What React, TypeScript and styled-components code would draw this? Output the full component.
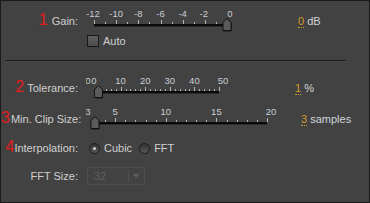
import React from 'react';
import styled, { createGlobalStyle } from 'styled-components';

const GlobalStyle = createGlobalStyle`
  html, body {
    margin: 0;
    padding: 0;
    background: #424242;
  }
`;

const Panel = styled.div`
  box-sizing: border-box;
  width: 370px;
  height: 203px;
  background: #424242;
  border: 1px solid #1a1a1a;
  display: flex;
  flex-direction: column;
  font-family: 'Liberation Sans', Arial, sans-serif;
  font-size: 11px;
  color: #d0d0d0;
  overflow: hidden;
`;

const Row = styled.div<{ $top: number; $h: number; $center?: boolean }>`
  display: grid;
  grid-template-columns: 85px 210px 1fr;
  height: ${(p) => p.$h}px;
  margin-top: ${(p) => p.$top}px;
  align-items: ${(p) => (p.$center ? 'center' : 'start')};
`;

const Label = styled.div<{ $pad?: number }>`
  text-align: right;
  padding-right: 8px;
  padding-top: ${(p) => p.$pad ?? 0}px;
  line-height: 13px;
  white-space: nowrap;
`;

const Num = styled.span<{ $gap: number }>`
  color: #e31c1c;
  font-size: 16px;
  line-height: 0;
  margin-right: ${(p) => p.$gap}px;
`;

const Value = styled.div<{ $dx: number }>`
  padding-top: 7px;
  margin-left: ${(p) => p.$dx}px;
  line-height: 13px;
  white-space: nowrap;
  color: #d0d4d8;
`;

const Hot = styled.span`
  color: #d19a2c;
  border-bottom: 1px dotted #d19a2c;
`;

const Controls = styled.div<{ $indent: number }>`
  display: flex;
  align-items: center;
  margin-left: ${(p) => p.$indent}px;
  line-height: 13px;
`;

const Check = styled.span`
  box-sizing: border-box;
  width: 12px;
  height: 12px;
  border: 1px solid #181818;
  background: linear-gradient(#606060, #4c4c4c);
  margin-right: 4px;
`;

const Radio = styled.span<{ $on?: boolean }>`
  box-sizing: border-box;
  width: 11px;
  height: 11px;
  border-radius: 50%;
  border: 1px solid #1a1a1a;
  background: linear-gradient(#353535, #555555);
  margin-right: 4px;
  display: flex;
  align-items: center;
  justify-content: center;
  &::after {
    content: '';
    display: ${(p) => (p.$on ? 'block' : 'none')};
    width: 3px;
    height: 3px;
    border-radius: 50%;
    background: #d0d0d0;
  }
`;

const RadioText = styled.span<{ $after: number }>`
  margin-right: ${(p) => p.$after}px;
`;

const Separator = styled.div`
  margin: 11px 0 0 4px;
  width: 341px;
  height: 1px;
  background: #1c1c1c;
  border-bottom: 1px solid #4a4a4a;
`;

const Select = styled.div`
  box-sizing: border-box;
  width: 58px;
  height: 18px;
  border: 1px solid #4f4f4f;
  display: flex;
  align-items: center;
  color: #606060;
`;

const SelectText = styled.span`
  flex: 1;
  padding-left: 6px;
`;

const SelectDivider = styled.span`
  width: 1px;
  height: 12px;
  background: #4f4f4f;
  margin-right: 4px;
`;

const Arrow = styled.span`
  width: 0;
  height: 0;
  border-left: 3.5px solid transparent;
  border-right: 3.5px solid transparent;
  border-top: 4px solid #606060;
  margin-right: 5px;
`;

type Mark = { v: number; t: string; dx?: number };

interface ScaleProps {
  min: number;
  max: number;
  value: number;
  x0: number;
  len: number;
  step: number;
  major: number;
  marks: Mark[];
}

// slider drawn as a small ruler: labels, ticks, track and thumb
const Scale = ({ min, max, value, x0, len, step, major, marks }: ScaleProps) => {
  const px = (v: number) => x0 + ((v - min) / (max - min)) * len;
  const ticks: number[] = [];
  for (let v = min; v <= max + 1e-6; v += step) ticks.push(v);
  const tx = px(value) - 4.5;

  return (
    <svg width={210} height={24} style={{ display: 'block' }}>
      {marks.map((m, i) => (
        <text
          key={i + 'm'}
          x={px(m.v) + (m.dx || 0)}
          y={9}
          textAnchor="middle"
          fontSize={9.5}
          fontFamily="'Liberation Sans', Arial, sans-serif"
          fill="#c8ced4"
        >
          {m.t}
        </text>
      ))}
      {ticks.map((v, i) => {
        const isMajor = Math.round(v) % major === 0;
        return (
          <rect
            key={i + 't'}
            x={Math.round(px(v))}
            y={isMajor ? 12 : 14}
            width={1}
            height={isMajor ? 4 : 2}
            fill="#b4b4b4"
          />
        );
      })}
      <rect x={x0} y={16} width={len} height={2} fill="#0a0a0a" />
      <rect x={x0} y={18} width={len} height={1} fill="#2a2a2a" />
      <g transform={`translate(${tx}, 10)`}>
        <polygon points="1,13.5 9,13.5 9,5 5,1 1,5" fill="#1a1a1a" />
        <polygon
          points="0.5,12.5 8.5,12.5 8.5,4.5 4.5,0.5 0.5,4.5"
          fill="#5b5b5b"
          stroke="#111"
        />
      </g>
    </svg>
  );
};

const App = () => {
  return (
    <>
      <GlobalStyle />
      <Panel>
        <Row $top={7} $h={24}>
          <Label $pad={7}>
            <Num $gap={4}>1</Num>Gain:
          </Label>
          <Scale
            min={-12}
            max={0}
            value={0}
            x0={8}
            len={133}
            step={1}
            major={2}
            marks={[
              { v: -12, t: '-12', dx: -1 },
              { v: -10, t: '-10' },
              { v: -8, t: '-8' },
              { v: -6, t: '-6' },
              { v: -4, t: '-4' },
              { v: -2, t: '-2', dx: -1 },
              { v: 0, t: '0', dx: 3 },
            ]}
          />
          <Value $dx={2}>
            <Hot>0</Hot> dB
          </Value>
        </Row>

        <Row $top={1} $h={16} $center>
          <div />
          <Controls $indent={1}>
            <Check />
            Auto
          </Controls>
        </Row>

        <Separator />

        <Row $top={13} $h={24}>
          <Label $pad={7}>
            <Num $gap={3}>2</Num>Tolerance:
          </Label>
          <Scale
            min={0}
            max={50}
            value={1}
            x0={10}
            len={123}
            step={2}
            major={10}
            marks={[
              { v: 0, t: '0', dx: -8 },
              { v: 0, t: '0', dx: -2 },
              { v: 10, t: '10' },
              { v: 20, t: '20' },
              { v: 30, t: '30' },
              { v: 40, t: '40' },
              { v: 50, t: '50', dx: 4 },
            ]}
          />
          <Value $dx={-1}>
            <Hot>1</Hot> %
          </Value>
        </Row>

        <Row $top={7} $h={24}>
          <Label $pad={7}>
            <Num $gap={1}>3</Num>Min. Clip Size:
          </Label>
          <Scale
            min={3}
            max={20}
            value={3}
            x0={9}
            len={172}
            step={1}
            major={5}
            marks={[
              { v: 3, t: '3', dx: -7 },
              { v: 5, t: '5' },
              { v: 10, t: '10' },
              { v: 15, t: '15' },
              { v: 20, t: '20', dx: 4 },
            ]}
          />
          <Value $dx={5}>
            <Hot>3</Hot> samples
          </Value>
        </Row>

        <Row $top={10} $h={16} $center>
          <Label>
            <Num $gap={0}>4</Num>Interpolation:
          </Label>
          <Controls $indent={3}>
            <Radio $on />
            <RadioText $after={7}>Cubic</RadioText>
            <Radio />
            <RadioText $after={0}>FFT</RadioText>
          </Controls>
        </Row>

        <Row $top={11} $h={18} $center>
          <Label>FFT Size:</Label>
          <Controls $indent={1}>
            <Select>
              <SelectText>32</SelectText>
              <SelectDivider />
              <Arrow />
            </Select>
          </Controls>
        </Row>
      </Panel>
    </>
  );
};

export default App;
